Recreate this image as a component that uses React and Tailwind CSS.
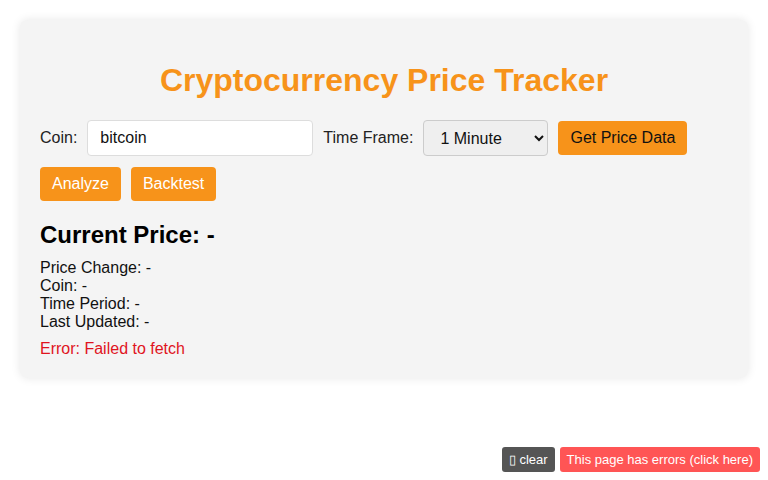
import React from "react";

export default function App() {
  return (
    <div className="min-h-[480px] bg-white p-5" style={{ fontFamily: '"Liberation Sans", Arial, sans-serif' }}>
      <div className="rounded-lg bg-[#f4f4f4] p-5 shadow-[0_0_10px_rgba(0,0,0,0.1)]">
        <h1 className="mt-[22px] mb-[21px] text-center text-[32px] font-bold leading-[37px] text-[#f7931a]">
          Cryptocurrency Price Tracker
        </h1>
        <div className="flex items-center gap-[10px] text-base text-[#222]">
          <label>Coin:</label>
          <input
            className="h-9 w-[226px] rounded border border-[#ddd] bg-white px-3 text-base text-[#111] outline-none"
            defaultValue="bitcoin"
          />
          <label>Time Frame:</label>
          <select className="h-9 w-[125px] rounded border border-[#ccc] bg-[#efefef] pl-3 text-base text-[#111]">
            <option>1 Minute</option>
          </select>
          <button className="h-[34px] rounded bg-[#f7931a] px-3 text-base text-[#111]">Get Price Data</button>
        </div>
        <div className="mt-[11px] flex gap-[10px]">
          <button className="h-[34px] rounded bg-[#f7931a] px-3 text-base text-white">Analyze</button>
          <button className="h-[34px] rounded bg-[#f7931a] px-3 text-base text-white">Backtest</button>
        </div>
        <h2 className="mt-5 mb-[10px] text-2xl font-bold leading-7 text-black">Current Price: -</h2>
        <div className="text-base leading-[18px] text-[#111]">
          <div>Price Change: -</div>
          <div>Coin: -</div>
          <div>Time Period: -</div>
          <div>Last Updated: -</div>
        </div>
        <div className="mt-[9px] text-base leading-[18px] text-[#e0141e]">Error: Failed to fetch</div>
      </div>
      <div className="fixed right-2 bottom-2 flex gap-[5px] text-[13px]" style={{ fontFamily: '"Liberation Sans", Arial, sans-serif' }}>
        <div className="flex h-[25px] items-center rounded-[3px] bg-[#555] px-[7px] text-white">▯ clear</div>
        <div className="flex h-[25px] items-center rounded-[3px] bg-[#f55] px-[7px] text-white">This page has errors (click here)</div>
      </div>
    </div>
  );
}
